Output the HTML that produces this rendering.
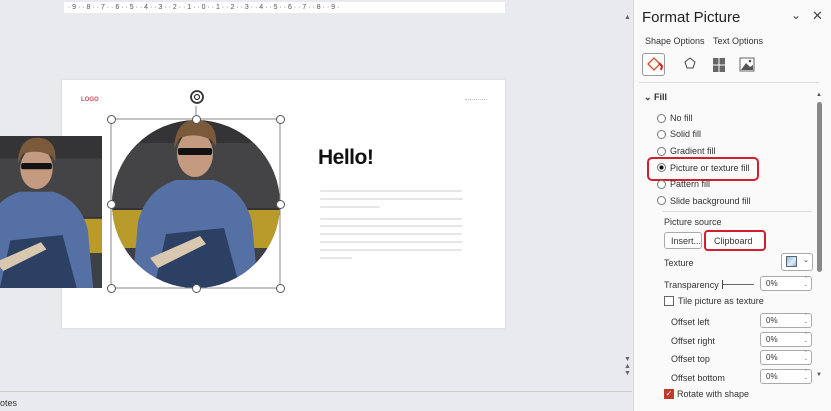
<!DOCTYPE html>
<html><head><meta charset="utf-8"><style>
*{margin:0;padding:0;box-sizing:border-box}
body{width:831px;height:411px;overflow:hidden;background:#e9eaee;font-family:"Liberation Sans",sans-serif;position:relative;color:#222}
.abs{position:absolute}
.panel{left:633px;top:0;width:198px;height:411px;background:#fafafa;border-left:1px solid #d8d8d8}
.t{position:absolute;font-size:9px;color:#333;white-space:nowrap}
.radio{position:absolute;width:9px;height:9px;border:1px solid #777;border-radius:50%;background:#fff}
.spin{position:absolute;width:52px;height:15px;border:1px solid #aaa;border-radius:3px;background:#fff;font-size:8px;padding:2px 0 0 5px;color:#333}
.spin:after{content:"⌃\A⌄";white-space:pre;position:absolute;right:3px;top:-1px;font-size:5px;line-height:6px;color:#666}
.line{position:absolute;height:2px;background:#e6e6e6;border-radius:1px}
.h{position:absolute;width:9px;height:9px;border:1.3px solid #555;border-radius:50%;background:#fff}
</style></head><body>
<div class="abs" style="left:64px;top:2px;width:441px;height:11px;background:#fff;font-size:7px;color:#555;line-height:11px;white-space:nowrap;overflow:hidden">&nbsp;&nbsp;· 9 · · 8 · · 7 · · 6 · · 5 · · 4 · · 3 · · 2 · · 1 · · 0 · · 1 · · 2 · · 3 · · 4 · · 5 · · 6 · · 7 · · 8 · · 9 ·</div>
<div class="abs" style="left:622px;top:12px;width:10px;height:380px;font-size:7px;color:#666">
<div style="position:absolute;top:2px;left:2px">▲</div>
<div style="position:absolute;top:344px;left:2px;line-height:7px">▼<br>▲<br>▼</div></div>
<div class="abs" style="left:0;top:391px;width:632px;height:1px;background:#ccc"></div>
<div class="abs" style="left:0;top:398px;font-size:9px;color:#333">otes</div>
<div class="abs" style="left:62px;top:80px;width:443px;height:248px;background:#fff;box-shadow:0 0 2px #ccc"></div>
<div class="abs" style="left:81px;top:97px;font-size:6px;color:#d0485a;font-weight:bold">LOGO</div>
<div class="abs" style="left:465px;top:99px;width:22px;height:1px;border-top:1px dotted #bbb"></div>
<div class="abs" style="left:318px;top:146px;font-size:21px;font-weight:900;color:#111;letter-spacing:-0.5px">Hello!</div>
<div class="abs" style="left:320px;top:190px;width:143px">
<div class="line" style="top:0;width:142px"></div><div class="line" style="top:8px;width:143px"></div><div class="line" style="top:16px;width:60px"></div>
<div class="line" style="top:28px;width:142px"></div><div class="line" style="top:35px;width:143px"></div><div class="line" style="top:43px;width:142px"></div><div class="line" style="top:51px;width:143px"></div><div class="line" style="top:59px;width:142px"></div><div class="line" style="top:67px;width:32px"></div>
</div>
<svg class="abs" style="left:0;top:0" width="632" height="391">
<defs>
<clipPath id="c"><circle cx="196" cy="204" r="84"/></clipPath>
<clipPath id="r"><rect x="0" y="136" width="102" height="152"/></clipPath>
<g id="pic">
<rect x="0" y="0" width="170" height="170" fill="#343436"/>
<rect x="0" y="25" width="170" height="65" fill="#444446"/>
<rect x="0" y="92" width="170" height="38" fill="#b89b2a"/>
<rect x="0" y="130" width="170" height="40" fill="#3e4048"/>
<path d="M22 170 L28 104 Q36 72 66 62 L104 62 Q134 72 142 104 L148 170Z" fill="#5570a4"/>
<path d="M44 170 L56 116 L114 110 L130 170Z" fill="#2c4064"/>
<path d="M40 140 L90 118 L96 126 L48 150Z" fill="#d8c8b0"/>
<ellipse cx="85" cy="36" rx="18" ry="23" fill="#c49a80"/>
<path d="M64 30 Q66 0 88 2 Q108 4 106 28 L101 22 Q86 14 70 20Z" fill="#7a5a3a"/>
<rect x="68" y="30" width="34" height="7" rx="2" fill="#111"/>
</g>
</defs>
<g clip-path="url(#r)"><use href="#pic" transform="translate(-40,136) scale(0.9)"/></g>
<g clip-path="url(#c)"><use href="#pic" transform="translate(110,118)"/></g>
<rect x="111" y="119" width="169" height="169" fill="none" stroke="#888" stroke-width="1"/>
<line x1="196" y1="106" x2="196" y2="119" stroke="#888"/>
<circle cx="197" cy="97" r="6" fill="none" stroke="#333" stroke-width="1.8"/>
<circle cx="197" cy="97" r="2.5" fill="none" stroke="#333" stroke-width="1.2"/>
</svg>
<div class="h" style="left:107px;top:115px"></div><div class="h" style="left:192px;top:115px"></div><div class="h" style="left:276px;top:115px"></div>
<div class="h" style="left:107px;top:200px"></div><div class="h" style="left:276px;top:200px"></div>
<div class="h" style="left:107px;top:284px"></div><div class="h" style="left:192px;top:284px"></div><div class="h" style="left:276px;top:284px"></div>

<div class="abs panel">
<div class="t" style="left:8px;top:9px;font-size:15px;color:#222">Format Picture</div>
<div class="t" style="left:157px;top:8px;font-size:12px;color:#444">⌄</div>
<div class="t" style="left:178px;top:8px;font-size:13px;color:#444">✕</div>
<div class="t" style="left:11px;top:36px">Shape Options</div>
<div class="t" style="left:79px;top:36px">Text Options</div>
<div class="abs" style="left:8px;top:53px;width:23px;height:23px;border:1px solid #999;border-radius:3px;background:#fff"></div>
<svg class="abs" style="left:8px;top:53px" width="120" height="26">
<path d="M6 11 L12 5 L18 11 L12 17Z" fill="none" stroke="#d05020" stroke-width="1.3"/><path d="M17 10 L20 13 L19 17" stroke="#d02020" stroke-width="2" fill="none"/>
<path d="M43 9 L48 5 L53 9 L51 15 L45 15Z" fill="none" stroke="#444" stroke-width="1"/>
<rect x="71" y="5" width="12" height="14" fill="#666"/><path d="M71 12H83M77 5V19" stroke="#fff"/>
<rect x="98" y="5" width="14" height="13" fill="none" stroke="#666"/><path d="M99 17 L104 10 L108 14 L111 12 L111 17Z" fill="#555"/><circle cx="108" cy="8" r="1.3" fill="#555"/>
</svg>
<div class="abs" style="left:5px;top:82px;width:180px;height:1px;background:#ddd"></div>
<div class="t" style="left:10px;top:92px;font-weight:bold">⌄ Fill</div>
<div class="abs" style="left:182px;top:92px;width:8px;height:300px">
<div style="font-size:6px;color:#555">▲</div>
<div style="position:absolute;left:1px;top:10px;width:5px;height:170px;background:#888;border-radius:3px"></div>
<div style="position:absolute;top:280px;font-size:6px;color:#555">▼</div></div>
<div class="radio" style="left:23px;top:114px"></div><div class="t" style="left:36px;top:113px">No fill</div>
<div class="radio" style="left:23px;top:130px"></div><div class="t" style="left:36px;top:129px">Solid fill</div>
<div class="radio" style="left:23px;top:147px"></div><div class="t" style="left:36px;top:146px">Gradient fill</div>
<div class="abs" style="left:13px;top:157px;width:112px;height:24px;border:2px solid #d02030;border-radius:5px"></div>
<div class="radio" style="left:23px;top:163px;background:radial-gradient(#111 40%,#fff 45%)"></div><div class="t" style="left:36px;top:163px">Picture or texture fill</div>
<div class="radio" style="left:23px;top:180px"></div><div class="t" style="left:36px;top:179px">Pattern fill</div>
<div class="radio" style="left:23px;top:196px"></div><div class="t" style="left:36px;top:196px">Slide background fill</div>
<div class="abs" style="left:28px;top:211px;width:150px;height:1px;background:#ddd"></div>
<div class="t" style="left:30px;top:217px">Picture source</div>
<div class="abs" style="left:30px;top:232px;width:38px;height:17px;border:1px solid #aaa;border-radius:3px;background:#fff"></div>
<div class="t" style="left:37px;top:236px">Insert...</div>
<div class="abs" style="left:70px;top:230px;width:62px;height:21px;border:2px solid #d02030;border-radius:4px;background:#fff"></div>
<div class="t" style="left:80px;top:236px">Clipboard</div>
<div class="t" style="left:30px;top:258px">Texture</div>
<div class="abs" style="left:147px;top:253px;width:32px;height:18px;border:1px solid #aaa;border-radius:3px;background:#fff"></div>
<div class="abs" style="left:152px;top:256px;width:11px;height:11px;border:1px solid #567;background:linear-gradient(135deg,#9bc 0,#def 60%,#9ab 100%)"></div>
<div class="t" style="left:169px;top:256px;font-size:7px">⌄</div>
<div class="t" style="left:30px;top:280px">Transparency</div>
<div class="abs" style="left:88px;top:284px;width:32px;height:1px;background:#666"></div>
<div class="abs" style="left:88px;top:280px;width:1px;height:9px;background:#444"></div>
<div class="spin" style="left:126px;top:276px">0%</div>
<div class="abs" style="left:30px;top:296px;width:10px;height:10px;border:1px solid #666;background:#fff"></div>
<div class="t" style="left:44px;top:296px">Tile picture as texture</div>
<div class="t" style="left:37px;top:317px">Offset left</div><div class="spin" style="left:126px;top:313px">0%</div>
<div class="t" style="left:37px;top:336px">Offset right</div><div class="spin" style="left:126px;top:332px">0%</div>
<div class="t" style="left:37px;top:354px">Offset top</div><div class="spin" style="left:126px;top:350px">0%</div>
<div class="t" style="left:37px;top:373px">Offset bottom</div><div class="spin" style="left:126px;top:369px">0%</div>
<div class="abs" style="left:30px;top:389px;width:10px;height:10px;background:#c0392b;color:#fff;font-size:8px;line-height:10px;text-align:center">✓</div>
<div class="t" style="left:43px;top:389px">Rotate with shape</div>
</div>
</body></html>
